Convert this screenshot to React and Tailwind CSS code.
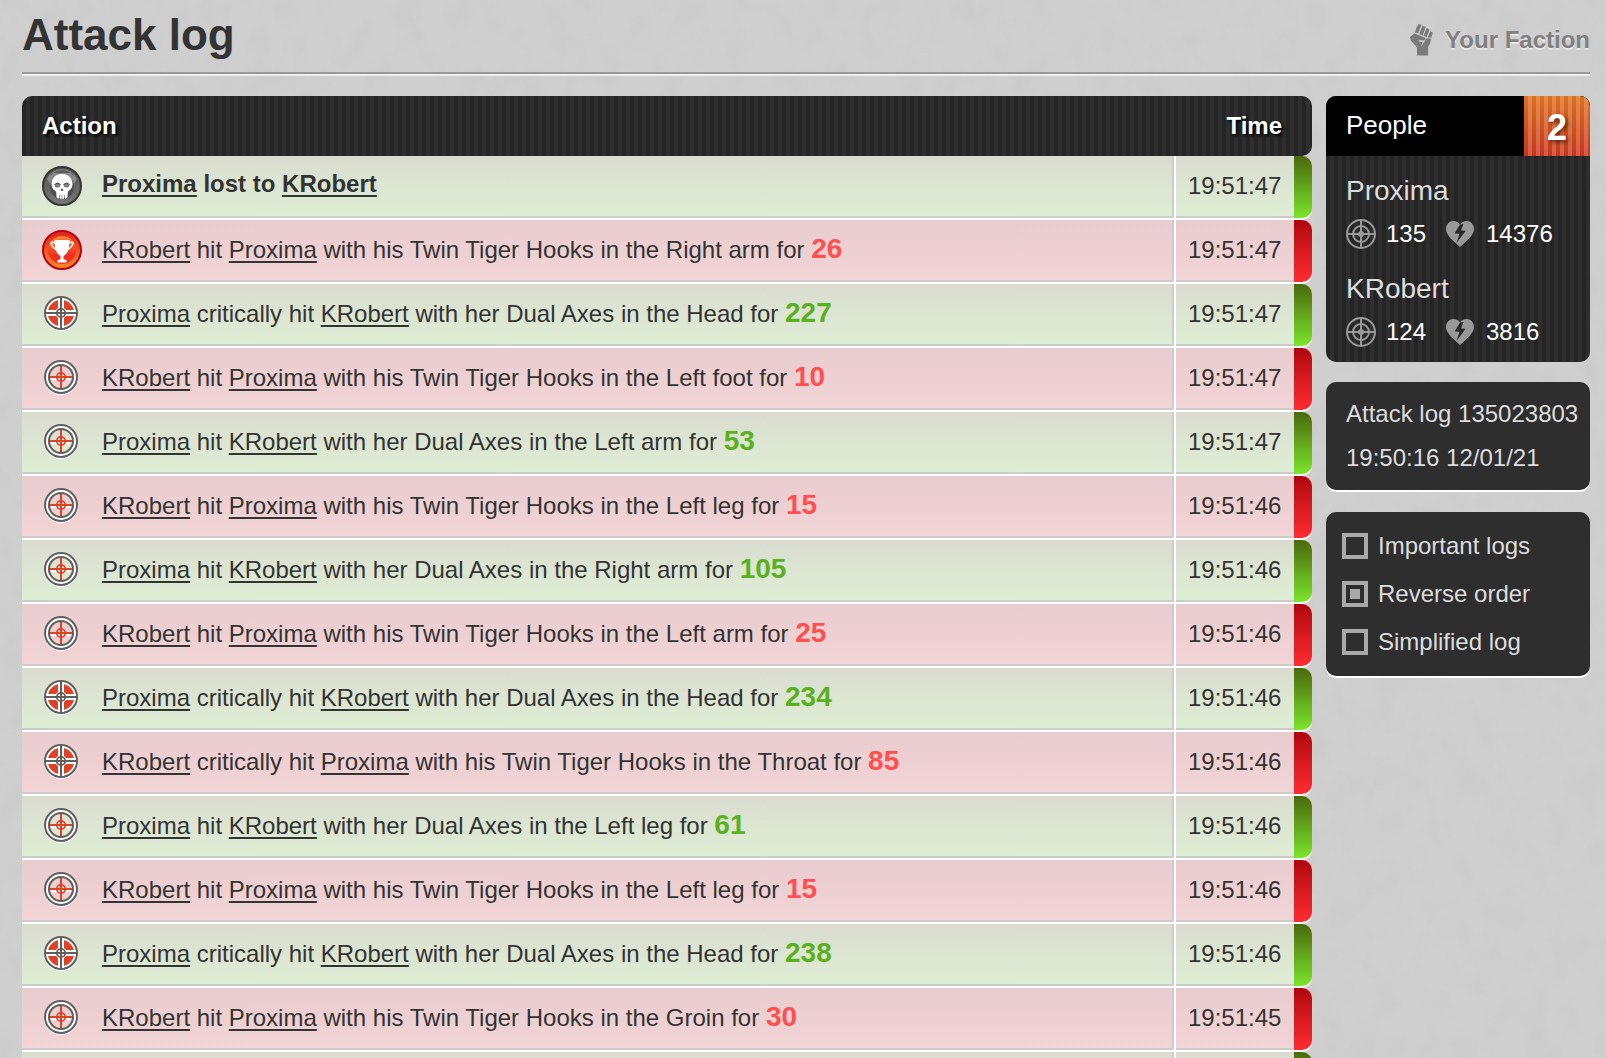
import React, { useState } from 'react';
import clsx from 'clsx';

const twin = 'with his Twin Tiger Hooks in the';
const axes = 'with her Dual Axes in the';

const logs = [
  { side: 'green', icon: 'skull', from: 'Proxima', verb: 'lost to', to: 'KRobert', time: '19:51:47' },
  { side: 'red', icon: 'trophy', from: 'KRobert', verb: 'hit', to: 'Proxima', rest: `${twin} Right arm for`, damage: 26, time: '19:51:47' },
  { side: 'green', icon: 'crit', from: 'Proxima', verb: 'critically hit', to: 'KRobert', rest: `${axes} Head for`, damage: 227, time: '19:51:47' },
  { side: 'red', icon: 'hit', from: 'KRobert', verb: 'hit', to: 'Proxima', rest: `${twin} Left foot for`, damage: 10, time: '19:51:47' },
  { side: 'green', icon: 'hit', from: 'Proxima', verb: 'hit', to: 'KRobert', rest: `${axes} Left arm for`, damage: 53, time: '19:51:47' },
  { side: 'red', icon: 'hit', from: 'KRobert', verb: 'hit', to: 'Proxima', rest: `${twin} Left leg for`, damage: 15, time: '19:51:46' },
  { side: 'green', icon: 'hit', from: 'Proxima', verb: 'hit', to: 'KRobert', rest: `${axes} Right arm for`, damage: 105, time: '19:51:46' },
  { side: 'red', icon: 'hit', from: 'KRobert', verb: 'hit', to: 'Proxima', rest: `${twin} Left arm for`, damage: 25, time: '19:51:46' },
  { side: 'green', icon: 'crit', from: 'Proxima', verb: 'critically hit', to: 'KRobert', rest: `${axes} Head for`, damage: 234, time: '19:51:46' },
  { side: 'red', icon: 'crit', from: 'KRobert', verb: 'critically hit', to: 'Proxima', rest: `${twin} Throat for`, damage: 85, time: '19:51:46' },
  { side: 'green', icon: 'hit', from: 'Proxima', verb: 'hit', to: 'KRobert', rest: `${axes} Left leg for`, damage: 61, time: '19:51:46' },
  { side: 'red', icon: 'hit', from: 'KRobert', verb: 'hit', to: 'Proxima', rest: `${twin} Left leg for`, damage: 15, time: '19:51:46' },
  { side: 'green', icon: 'crit', from: 'Proxima', verb: 'critically hit', to: 'KRobert', rest: `${axes} Head for`, damage: 238, time: '19:51:46' },
  { side: 'red', icon: 'hit', from: 'KRobert', verb: 'hit', to: 'Proxima', rest: `${twin} Groin for`, damage: 30, time: '19:51:45' },
  { side: 'green' },
];

const people = [
  { name: 'Proxima', hits: 135, damage: 14376 },
  { name: 'KRobert', hits: 124, damage: 3816 },
];

const rowColors = {
  green: 'bg-linear-to-b from-[#dadcd0] to-[#deeed4]',
  red: 'bg-linear-to-b from-[#e9cccf] to-[#f2d4d6]',
};

const barColors = {
  green: 'bg-linear-to-b from-[#4b690e] to-[#79e62b]',
  red: 'bg-linear-to-b from-[#b0050e] to-[#ff2b31]',
};

const stripes =
  'bg-[repeating-linear-gradient(90deg,#242424_0px,#242424_4px,#2e2e2e_4px,#2e2e2e_8px)]';

const SkullIcon = () => (
  <svg viewBox="0 0 40 40" className="w-10 h-10">
    <defs>
      <linearGradient id="skullBg" x1="0" y1="0" x2="0" y2="1">
        <stop offset="0" stopColor="#505050" />
        <stop offset="1" stopColor="#787878" />
      </linearGradient>
    </defs>
    <circle cx="20" cy="20" r="19" fill="url(#skullBg)" stroke="#353535" strokeWidth="2" />
    <path d="M5 13a16.500 16.500 0 0 1 30 0L28 24H12z" fill="#8a8a8a" />
    <path d="M7 11a15.500 15.500 0 0 1 26 0L28 7H12z" fill="#5c5c5c" />
    <circle cx="20" cy="21" r="12" fill="#4d4d4d" />
    <path
      d="M20 8c-6.500 0-10.500 4.500-10.500 10 0 3 1.200 5.500 4 7l.7 1.200.3 5 2 1.500 1.200-1.500.8 1.700h3l.8-1.700 1.200 1.500 2-1.500.3-5 .7-1.200c2.800-1.500 4-4 4-7C30.500 12.500 26.500 8 20 8z"
      fill="#fff"
    />
    <ellipse cx="15.500" cy="19.500" rx="2.800" ry="2" fill="#808080" />
    <ellipse cx="24.500" cy="19.500" rx="2.800" ry="2" fill="#808080" />
    <path d="M12.500 18.500q3-3 6 0M21.500 18.500q3-3 6 0" stroke="#333" fill="none" />
    <path d="M20 22l-1.600 2.700h3.200z" fill="#444" />
    <path d="M17.500 29v3M20 29v4M22.500 29v3" stroke="#777" strokeWidth=".7" />
  </svg>
);

const TrophyIcon = () => (
  <svg viewBox="0 0 40 40" className="w-10 h-10">
    <defs>
      <linearGradient id="trophyBg" x1="0" y1="0" x2="0" y2="1">
        <stop offset="0" stopColor="#e51f1b" />
        <stop offset="1" stopColor="#f98a2c" />
      </linearGradient>
      <linearGradient id="trophyInner" x1="0" y1="0" x2="0" y2="1">
        <stop offset="0" stopColor="#f6882c" />
        <stop offset=".7" stopColor="#ee2f22" />
      </linearGradient>
    </defs>
    <circle cx="20" cy="20" r="19" fill="url(#trophyBg)" stroke="#b00714" strokeWidth="2" />
    <circle cx="20" cy="20" r="14" fill="url(#trophyInner)" />
    <path
      d="M14 12.500H9c.3 3.500 2 5.500 6.500 8M26 12.500h5c-.3 3.500-2 5.500-6.500 8"
      stroke="#fff"
      strokeWidth="1.500"
      fill="none"
    />
    <path
      d="M12.500 10h15c-.2 7-1 12-4.500 15l-1.500 1v3l2 1h1v2.500h-9V30h1l2-1v-3L17 25c-3.500-3-4.300-8-4.500-15z"
      fill="#fff"
    />
  </svg>
);

const HitIcon = () => (
  <svg viewBox="0 0 36 36" className="w-9 h-9" fill="none">
    <circle cx="18" cy="19" r="16" stroke="#fff" strokeWidth="2" />
    <circle cx="18" cy="18" r="14.500" stroke="#fff" strokeWidth="3" />
    <circle cx="18" cy="18" r="16" stroke="#606060" strokeWidth="2" />
    <circle cx="18" cy="18" r="12" stroke="#606060" strokeWidth="2" />
    <path d="M8 20h20" stroke="#fff" strokeWidth="2" />
    <path d="M18 7v22M7 18h22" stroke="#de4327" strokeWidth="2" />
    <circle cx="18" cy="18" r="4.200" stroke="#de4327" strokeWidth="1.800" />
  </svg>
);

const CritIcon = () => (
  <svg viewBox="0 0 36 36" className="w-9 h-9" fill="none">
    <circle cx="18" cy="19" r="17" fill="#fff" />
    <circle cx="18" cy="18" r="16" fill="#fff" stroke="#606060" strokeWidth="2" />
    <circle cx="18" cy="18" r="9.500" stroke="#de4327" strokeWidth="7.500" />
    <path d="M18 3v30M3 18h30" stroke="#fff" strokeWidth="6" />
    <circle cx="18" cy="18" r="5.500" fill="#fff" />
    <path d="M18 2v32M2 18h32" stroke="#606060" strokeWidth="2" />
    <circle cx="18" cy="18" r="4.200" stroke="#606060" strokeWidth="1.800" />
  </svg>
);

const TargetIcon = () => (
  <svg viewBox="0 0 30 30" className="w-[30px] h-[30px]" fill="none" stroke="#999" strokeWidth="2">
    <circle cx="15" cy="15" r="14" />
    <circle cx="15" cy="15" r="8" />
    <path d="M15 1v28M1 15h28" />
    <circle cx="15" cy="15" r="3" fill="#999" stroke="none" />
  </svg>
);

const BrokenHeartIcon = () => (
  <svg viewBox="0 0 28 26" className="w-7 h-[26px]">
    <path
      d="M14 26C8 20.500 0 14.500 0 8 0 3.500 3.300 0 7.500 0 10.300 0 12.800 1.300 14 3.700 15.200 1.300 17.700 0 20.500 0 24.700 0 28 3.500 28 8c0 6.500-8 12.500-14 18z"
      fill="#999"
    />
    <path d="M14 3.500L8.500 12.500l5 .3L10.500 22l9.200-12.200-4.700-.3L17.500 3z" fill="#2a2a2a" />
  </svg>
);

const FistIcon = () => (
  <svg viewBox="0 0 23 32" className="w-[23px] h-8" fill="#7b7b7b">
    <path d="M8.500 0l3 .8-3.300 8.500-3.400-.9L6.500 3.500z" />
    <path d="M12.500 1.800l3.200 1-3 8.800-3.600-1.500z" />
    <path d="M16.600 4.100l3 1.400-2.900 7.600-3.200-1.400z" />
    <path d="M20.300 7.200l2.500 1.500-1.500 5.100-3.700-.4z" />
    <path d="M4.300 9.300l3.500 1.400 8 3.200-1.200 2.500-5.200-.5-1.100 1.300 4.300 1-1.800 4.700 3.700-5.100 1.800-3.200h4.500c-.1 3-.5 5.400-2.400 7.600l-.3 1.600V31.500H7v-8L1 16.800 0 13z" />
  </svg>
);

const icons = { skull: SkullIcon, trophy: TrophyIcon, hit: HitIcon, crit: CritIcon };

const Player = ({ name }) => (
  <a href="#" className="underline decoration-2 underline-offset-3">
    {name}
  </a>
);

const LogRow = ({ log }) => {
  const Icon = icons[log.icon];
  const small = log.icon === 'hit' || log.icon === 'crit';
  return (
    <tr>
      <td className="p-0 pr-0.5 pb-0.5 bg-white">
        <div
          className={clsx(
            'flex items-center h-[62px] pl-5 border-b-2 border-r-2 border-[#ccc]',
            rowColors[log.side]
          )}
        >
          {Icon && (
            <>
              <span className={clsx('flex w-[60px] shrink-0', small && 'pl-px pb-0.5')}>
                <Icon />
              </span>
              <p className={clsx('leading-8 whitespace-nowrap', log.damage ? 'pb-0.5' : 'pb-1 font-bold')}>
                <Player name={log.from} /> {log.verb} <Player name={log.to} /> {log.rest}{' '}
                {log.damage && (
                  <span
                    className={clsx(
                      'text-[28px] leading-8 font-bold',
                      log.side === 'green' ? 'text-[#59b11f]' : 'text-[#ff4f4f]'
                    )}
                  >
                    {log.damage}
                  </span>
                )}
              </p>
            </>
          )}
        </div>
      </td>
      <td className="p-0 pb-0.5 bg-white">
        <div
          className={clsx(
            'flex items-center h-[62px] pl-3 border-b-2 border-[#ccc]',
            rowColors[log.side]
          )}
        >
          {log.time}
        </div>
      </td>
      <td className="p-0 pb-0.5">
        <div className={clsx('h-[62px] rounded-r-[10px] shadow-[0_2px_0_#fff]', barColors[log.side])} />
      </td>
    </tr>
  );
};

const LogTable = () => (
  <table className="flex-1 table-fixed border-separate border-spacing-0 text-[#333]">
    <colgroup>
      <col />
      <col className="w-[118px]" />
      <col className="w-[18px]" />
    </colgroup>
    <thead>
      <tr
        className={clsx(
          'h-[60px] text-white text-shadow-[2px_2px_3px_#000] [clip-path:inset(0_round_10px_10px_10px_0)]',
          stripes
        )}
      >
        <th className="p-0 pl-5 text-left font-bold">Action</th>
        <th colSpan={2} className="p-0 pr-[30px] text-right font-bold">
          Time
        </th>
      </tr>
    </thead>
    <tbody>
      {logs.map((log, index) => (
        <LogRow key={index} log={log} />
      ))}
    </tbody>
  </table>
);

const People = () => (
  <section className={clsx('rounded-[10px] overflow-hidden', stripes)}>
    <div className="flex h-[60px] bg-black text-white">
      <h2 className="flex-1 pl-5 text-[26px] leading-[58px]">People</h2>
      <div className="w-[66px] bg-[repeating-linear-gradient(90deg,transparent_0px,transparent_4px,rgba(255,255,255,0.2)_4px,rgba(255,255,255,0.2)_8px),linear-gradient(#dc7121,#c6351b)] text-center text-4xl leading-[64px] font-bold text-shadow-[2px_2px_4px_rgba(0,0,0,0.6)]">
        {people.length}
      </div>
    </div>
    <ul className="flex flex-col gap-[22px] px-5 pt-[18px] pb-[14px]">
      {people.map((person) => (
        <li key={person.name}>
          <h3 className="text-[28px] leading-[34px] text-[#ddd]">{person.name}</h3>
          <div className="flex items-center pt-[10px] text-white leading-8">
            <TargetIcon />
            <span className="w-[70px] pl-[10px]">{person.hits}</span>
            <BrokenHeartIcon />
            <span className="pl-3">{person.damage}</span>
          </div>
        </li>
      ))}
    </ul>
  </section>
);

const Options = () => {
  const [options, setOptions] = useState({
    'Important logs': false,
    'Reverse order': true,
    'Simplified log': false,
  });

  return (
    <section className="flex flex-col gap-4 px-4 py-[18px] rounded-[10px] bg-[#2e2e2e] shadow-[0_2px_0_#fff]">
      {Object.keys(options).map((label) => (
        <label key={label} className="flex items-center gap-[10px] leading-8 text-[#ddd]">
          <input
            type="checkbox"
            checked={options[label]}
            onChange={(e) => setOptions({ ...options, [label]: e.target.checked })}
            className="appearance-none w-[26px] h-[26px] p-1 border-4 border-[#a9a9a9] bg-clip-content checked:bg-[#a9a9a9]"
          />
          {label}
        </label>
      ))}
    </section>
  );
};

// Concrete-like wall behind the page
const Wall = () => (
  <svg className="absolute inset-0 -z-10 w-full h-full" aria-hidden="true">
    <filter id="wall" x="0" y="0" width="100%" height="100%">
      <feTurbulence type="fractalNoise" baseFrequency="0.04 0.03" numOctaves="4" seed="7" />
      <feColorMatrix values="0 0 0 0 0.35  0 0 0 0 0.35  0 0 0 0 0.35  0.8 0 0 0 -0.34" />
    </filter>
    <rect width="100%" height="100%" filter="url(#wall)" opacity=".25" />
  </svg>
);

export default function App() {
  return (
    <div className="relative isolate h-screen overflow-hidden bg-[#cfcfcf] pl-[22px] pr-4 font-['Liberation_Sans',Arial,sans-serif] text-2xl text-[#333]">
      <Wall />
      <header className="flex items-center justify-between h-[76px] border-b-2 border-[#eee] shadow-[inset_0_-2px_0_#999]">
        <h1 className="pb-1 text-[44px] leading-[52px] font-bold">Attack log</h1>
        <a
          href="#"
          className="flex items-center gap-3 pt-1.5 font-bold text-[#808080] text-shadow-[0_2px_0_#e6e6e6]"
        >
          <FistIcon />
          Your Faction
        </a>
      </header>
      <main className="flex items-start gap-[14px] pt-5">
        <LogTable />
        <aside className="flex flex-col w-[264px] shrink-0 gap-5">
          <People />
          <section className="mb-0.5 px-5 py-[10px] rounded-[10px] bg-[#2e2e2e] shadow-[0_2px_0_#fff] leading-[44px] text-[#ddd] whitespace-nowrap">
            <p>Attack log 135023803</p>
            <p>19:50:16 12/01/21</p>
          </section>
          <Options />
        </aside>
      </main>
    </div>
  );
}
